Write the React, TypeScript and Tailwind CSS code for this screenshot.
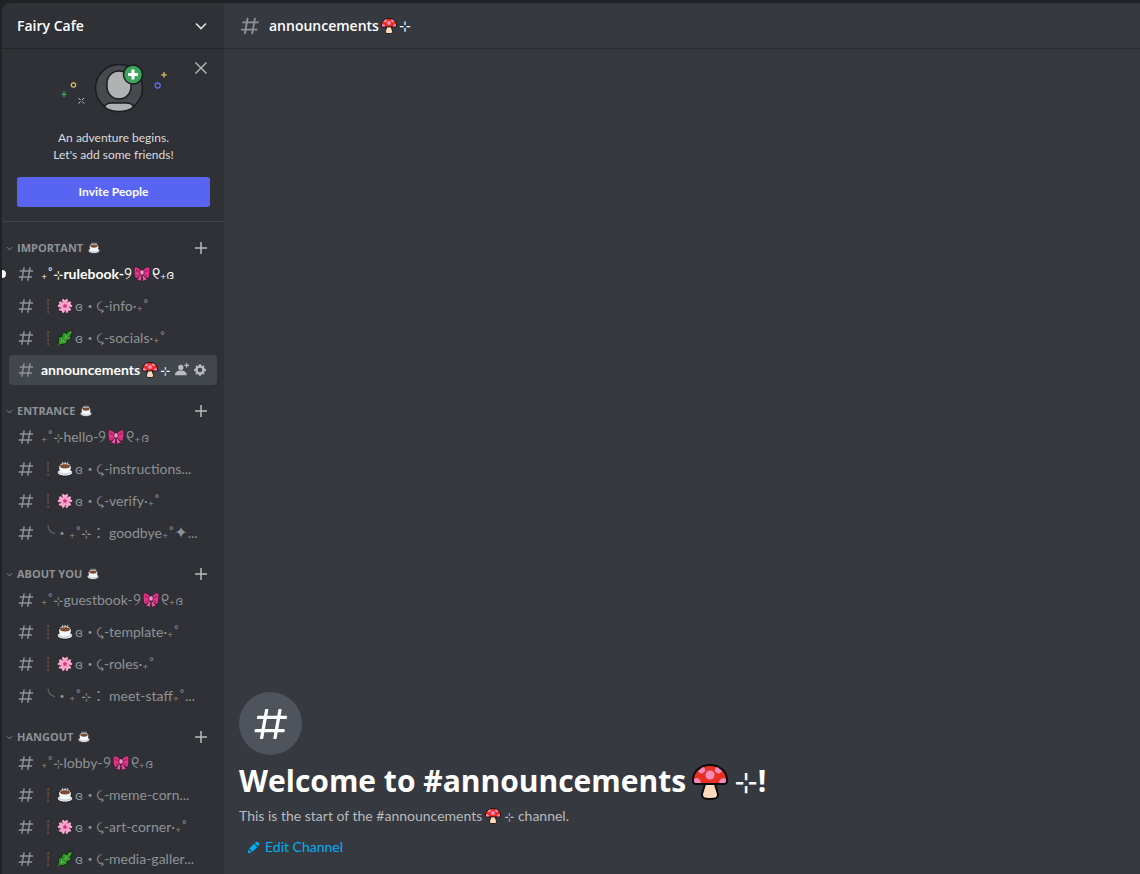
import React from "react";

const SPLIT = /(☕|🎀|🌸|🌿|🍄|[┊・：╰]|[₊˚⊹⤹]+|[୨୧✦]|ദ)/u;

const categories = [
  {
    title: "Important",
    channels: [
      { name: "₊˚⊹rulebook-୨🎀୧₊ദ", unread: true },
      { name: "┊🌸ɞ・⤹-info·₊˚" },
      { name: "┊🌿ɞ・⤹-socials·₊˚" },
      { name: "announcements🍄⊹", active: true },
    ],
  },
  {
    title: "Entrance",
    channels: [
      { name: "₊˚⊹hello-୨🎀୧₊ദ" },
      { name: "┊☕ɞ・⤹-instructions..." },
      { name: "┊🌸ɞ・⤹-verify·₊˚" },
      { name: "╰・₊˚⊹： goodbye₊˚✦..." },
    ],
  },
  {
    title: "About you",
    channels: [
      { name: "₊˚⊹guestbook-୨🎀୧₊ദ" },
      { name: "┊☕ɞ・⤹-template·₊˚" },
      { name: "┊🌸ɞ・⤹-roles·₊˚" },
      { name: "╰・₊˚⊹： meet-staff₊˚..." },
    ],
  },
  {
    title: "Hangout",
    channels: [
      { name: "₊˚⊹lobby-୨🎀୧₊ദ" },
      { name: "┊☕ɞ・⤹-meme-corn..." },
      { name: "┊🌸ɞ・⤹-art-corner·₊˚" },
      { name: "┊🌿ɞ・⤹-media-galler..." },
    ],
  },
];

const HashIcon = ({ className }: { className: string }) => (
  <svg viewBox="0 0 24 24" fill="currentColor" className={className} aria-hidden="true">
    <path
      fillRule="evenodd"
      clipRule="evenodd"
      d="M5.887 21a.5.5 0 0 1-.493-.587L6 17H2.595a.5.5 0 0 1-.492-.586l.175-1A.5.5 0 0 1 2.77 15h3.58l1.06-6H4.005a.5.5 0 0 1-.492-.586l.175-1A.5.5 0 0 1 4.18 7h3.58l.637-3.587A.5.5 0 0 1 8.889 3h.984a.5.5 0 0 1 .493.587L9.76 7h6l.637-3.587A.5.5 0 0 1 16.889 3h.984a.5.5 0 0 1 .493.587L17.76 7h3.405a.5.5 0 0 1 .492.586l-.175 1A.5.5 0 0 1 20.99 9h-3.58l-1.06 6h3.405a.5.5 0 0 1 .492.586l-.175 1a.5.5 0 0 1-.492.414H16l-.637 3.587a.5.5 0 0 1-.492.413h-.984a.5.5 0 0 1-.493-.587L14 17H8l-.637 3.587a.5.5 0 0 1-.492.413h-.984ZM9.41 9l-1.06 6h6l1.06-6h-6Z"
    />
  </svg>
);

const emojiArt: Record<string, React.ReactNode> = {
  "☕": (
    <>
      <path
        d="M5 12C5 7 11 4 18 4s13 3 13 8c1 4 1 6 0 9 3 1 4 3 4 5 0 5-8 8-17 8S1 31 1 26c0-2 1-4 4-5-1-3-1-5 0-9z"
        fill="#f5f8fa"
        stroke="#1b1c1f"
        strokeWidth="2"
      />
      <path d="M5 23c4 6 22 6 26 0 2 1 3 2 3 3-4 7-28 7-32 0 0-1 1-2 3-3z" fill="#cdd3d8" />
      <path d="M5 12c0 9 5 15 13 15s13-6 13-15z" fill="#f5f8fa" />
      <ellipse cx="18" cy="12" rx="11" ry="5" fill="#7d4a34" />
      <path d="M12 8c-2-3 2-3 0-6M18 8c-2-3 2-3 0-6M24 8c-2-3 2-3 0-6" fill="none" stroke="#dfe5ea" strokeWidth="2" />
    </>
  ),
  "🎀": (
    <g stroke="#1b1c1f" strokeWidth="1.500" strokeLinejoin="round">
      <path d="M15 17 5 34l6-2 5 3 3-16zM21 17l10 17-6-2-5 3-3-16z" fill="#ea4fa0" />
      <path d="M18 13C12 3 5 1 2 3c-3 3-1 20 1 24 3 3 10-4 15-10z" fill="#e6348c" />
      <path d="M18 13c6-10 13-12 16-10 3 3 1 20-1 24-3 3-10-4-15-10z" fill="#e6348c" />
      <path d="M5 7l9 7-10-2zM31 7l-9 7 10-2zM5 22l8-5-5 6zM31 22l-8-5 5 6z" fill="#a91c5f" stroke="none" />
      <rect x="13.500" y="9" width="9" height="11" rx="3" fill="#ff8fc8" />
    </g>
  ),
  "🌸": (
    <>
      <g fill="#f9a8d0" stroke="#1b1c1f" strokeWidth="1.500">
        <path d="M18 18C8 11 9 2 14 1l4 3 4-3c5 1 6 10-4 17z" />
        <path d="M18 18C8 11 9 2 14 1l4 3 4-3c5 1 6 10-4 17z" transform="rotate(72 18 18)" />
        <path d="M18 18C8 11 9 2 14 1l4 3 4-3c5 1 6 10-4 17z" transform="rotate(144 18 18)" />
        <path d="M18 18C8 11 9 2 14 1l4 3 4-3c5 1 6 10-4 17z" transform="rotate(216 18 18)" />
        <path d="M18 18C8 11 9 2 14 1l4 3 4-3c5 1 6 10-4 17z" transform="rotate(288 18 18)" />
      </g>
      <circle cx="18" cy="18" r="9" fill="#f9a8d0" />
      <path d="M18 11v7M12 16l6 2M24 16l-6 2M14 24l4-6M22 24l-4-6" stroke="#ea5a9c" strokeWidth="1.500" />
      <circle cx="18" cy="18" r="4" fill="#d62c7b" />
    </>
  ),
  "🌿": (
    <>
      <path
        d="M5 34C1 27 3 18 6 13l4 3c0-6 3-10 8-12l3 5c2-5 7-8 13-8 0 6-1 10-5 13l3 2c-2 5-6 8-11 9l2 3c-4 4-10 6-16 4z"
        fill="#2c8f2b"
        stroke="#0f260d"
        strokeWidth="2"
        strokeLinejoin="round"
      />
      <path d="M2 35 32 4M10 27V17M10 26h11M19 18V9M18 18h11" fill="none" stroke="#7cc144" strokeWidth="1.500" />
    </>
  ),
  "🍄": (
    <g strokeLinejoin="round">
      <path d="M13 18h10c0 6 3 9 3 13 0 3-2 4-8 4s-8-1-8-4c0-4 3-7 3-13z" fill="#ffd9bd" stroke="#0c0c0d" strokeWidth="2" />
      <path d="M1 16C1 7 9 1 18 1s17 6 17 15c0 3-1 4-3 4H4c-2 0-3-1-3-4z" fill="#e93022" stroke="#0c0c0d" strokeWidth="2" />
      <g fill="#f78bb8">
        <circle cx="18" cy="11" r="4.500" />
        <path d="M2 15c3-2 7 0 7 4H4c-2 0-2-2-2-4zM34 15c-3-2-7 0-7 4h5c2 0 2-2 2-4zM6 7l5-4c3 1 3 5 0 6-2 1-4 0-5-2zM30 7l-5-4c-3 1-3 5 0 6 2 1 4 0 5-2z" />
      </g>
    </g>
  ),
};

const EmojiText = ({
  text,
  size,
  symbol = "text-[12px]",
}: {
  text: string;
  size: string;
  symbol?: string;
}) => (
  <>
    {text.split(SPLIT).map((part, key) => {
      if (emojiArt[part]) {
        return (
          <svg key={key} viewBox="0 0 36 36" role="img" aria-label={part} className={`inline-block ${size}`}>
            {emojiArt[part]}
          </svg>
        );
      }
      if (/^[┊・：╰]$/u.test(part)) {
        return (
          <span key={key} className="font-['Noto_Sans_CJK_JP',sans-serif] leading-none">
            {part}
          </span>
        );
      }
      if (/^[₊˚⊹⤹]+$/u.test(part)) {
        return (
          <span key={key} className={`font-['DejaVu_Sans',sans-serif] font-normal leading-none ${symbol}`}>
            {part}
          </span>
        );
      }
      if (/^[୨୧✦]$/u.test(part)) {
        return (
          <span key={key} className="text-[16px] font-normal leading-none">
            {part}
          </span>
        );
      }
      if (part === "ദ") {
        return (
          <span key={key} className="text-[12px] font-normal leading-none">
            {part}
          </span>
        );
      }
      return <React.Fragment key={key}>{part}</React.Fragment>;
    })}
  </>
);

const InviteArt = () => (
  <svg viewBox="58 62 110 52" className="w-[110px] h-[52px]" fill="none" aria-hidden="true">
    <circle cx="118" cy="88" r="23.500" fill="#46494e" stroke="#1b1c1f" strokeWidth="1.500" />
    <path d="M103.500 107c1-3 4-4 7-4h15c3 0 6 1 7 4-8 6-21 6-29 0z" fill="#b0b1b3" stroke="#1b1c1f" strokeWidth="1.500" />
    <rect x="106" y="71" width="24" height="28" rx="12" fill="#b0b1b3" stroke="#1b1c1f" strokeWidth="1.500" />
    <circle cx="132" cy="74.500" r="9.500" fill="#3ba55c" stroke="#1b1c1f" strokeWidth="1.500" />
    <path d="M132 69.500v10M127 74.500h10" stroke="#fff" strokeWidth="3" />
    <circle cx="72.500" cy="85" r="2.200" stroke="#d9c25a" strokeWidth="1.200" />
    <path d="M163 72v5.500M160.300 74.800h5.500" stroke="#d9c25a" strokeWidth="1.300" />
    <path d="M63 91.500v5.500M60.300 94.300h5.500" stroke="#3ba55c" strokeWidth="1.300" />
    <circle cx="156.700" cy="85.500" r="2.500" stroke="#5b70e8" strokeWidth="1.300" />
    <path d="m77.500 98 2 2M83 98l-2 2M77.500 103.500l2-2M83 103.500l-2-2" stroke="#c3cdea" strokeWidth="1" />
  </svg>
);

const PlusIcon = () => (
  <svg viewBox="0 0 12 12" className="size-3" stroke="currentColor" strokeWidth="1.500" aria-hidden="true">
    <path d="M6 0v12M0 6h12" />
  </svg>
);

type ChannelType = { name: string; unread?: boolean; active?: boolean };

const Channel = ({ name, unread, active }: ChannelType) => (
  <li
    className={`relative flex items-center h-[30px] mx-[7px] rounded ${
      active ? "bg-[#42464d]" : "hover:bg-[#34373c]"
    }`}
  >
    {unread && <span className="absolute -left-[7px] w-1 h-2 rounded-r-full bg-white" />}
    <a
      href="#"
      className={`flex flex-1 min-w-0 items-center gap-1.5 pl-2 text-[14px] leading-5 whitespace-nowrap ${
        unread || active ? "text-white font-bold" : "text-[#8e9297]"
      }`}
    >
      <HashIcon className="size-[18px] shrink-0 text-[#8e9297]" />
      <span>
        <EmojiText text={name} size="size-4 mx-[2px] -mt-[2px]" />
      </span>
    </a>
    {active && (
      <div className="flex items-center gap-1 pr-[10px] text-[#b9bbbe]">
        <button type="button" aria-label="Create invite" className="cursor-pointer">
          <svg viewBox="0 0 24 24" className="size-[14px]" fill="currentColor" aria-hidden="true">
            <path d="M21 3V0h-2v3h-3v2h3v3h2V5h3V3zM10 12a4.500 4.500 0 1 0 0-9 4.500 4.500 0 0 0 0 9zM10 13c-6 0-10 3-10 7v1h20v-1c0-4-4-7-10-7z" />
          </svg>
        </button>
        <button type="button" aria-label="Edit channel" className="cursor-pointer">
          <svg viewBox="0 0 24 24" className="size-[14px]" fill="currentColor" aria-hidden="true">
            <path
              fillRule="evenodd"
              d="M19.738 10H22v4h-2.261a7.952 7.952 0 0 1-1.174 2.564L20 18l-2 2-1.435-1.436A7.946 7.946 0 0 1 14 19.738V22h-4v-2.262a7.940 7.940 0 0 1-2.564-1.174L6 20l-2-2 1.436-1.436A7.911 7.911 0 0 1 4.262 14H2v-4h2.262a7.900 7.900 0 0 1 1.174-2.564L4 6l2-2 1.436 1.436A7.900 7.900 0 0 1 10 4.262V2h4v2.261a7.967 7.967 0 0 1 2.565 1.175L18 4l2 2-1.435 1.436A7.920 7.920 0 0 1 19.738 10zM12 16a4 4 0 1 0 0-8 4 4 0 0 0 0 8z"
            />
          </svg>
        </button>
      </div>
    )}
  </li>
);

const Sidebar = () => (
  <nav className="flex flex-col w-[222px] shrink-0 overflow-hidden rounded-tl-lg bg-[#2f3136]">
    <button
      type="button"
      className="flex shrink-0 items-center justify-between h-[46px] pl-[15px] pr-[17px] border-b border-[#222428] text-white text-[14px] font-semibold font-['Open_Sans',sans-serif] cursor-pointer"
    >
      Fairy Cafe
      <svg viewBox="0 0 12 12" className="size-3" fill="none" stroke="#dcddde" strokeWidth="1.700" aria-hidden="true">
        <path d="m1 3.500 5 5 5-5" />
      </svg>
    </button>

    <section className="relative flex shrink-0 flex-col items-center h-[173px] pl-[15px] pr-[14px] pt-[13px] border-b border-[#40434a]">
      <button type="button" aria-label="Close" className="absolute top-[13px] right-[17px] text-[#b9bbbe] cursor-pointer">
        <svg viewBox="0 0 12 12" className="size-3" stroke="currentColor" strokeWidth="1.400" aria-hidden="true">
          <path d="m.5.5 11 11M11.500.5l-11 11" />
        </svg>
      </button>
      <InviteArt />
      <p className="mt-[15px] text-center text-[12px] leading-[17px] text-[#dcddde]">
        An adventure begins.
        <br />
        Let's add some friends!
      </p>
      <button
        type="button"
        className="mt-[14px] h-[30px] w-full rounded-[3px] bg-[#5865f2] text-white text-[12px] font-bold cursor-pointer"
      >
        Invite People
      </button>
    </section>

    <div className="flex flex-col gap-[17px] pt-[17px]">
      {categories.map((category) => (
        <section key={category.title}>
          <div className="flex items-center justify-between h-[18px] mb-[2px] pl-1 pr-[17px] text-[#8e9297]">
            <button
              type="button"
              className="flex items-center gap-1 text-[11px] font-bold font-['Open_Sans',sans-serif] uppercase cursor-pointer"
            >
              <svg viewBox="0 0 8 8" className="size-[7px]" fill="none" stroke="currentColor" aria-hidden="true">
                <path d="m1 2.500 3 3 3-3" />
              </svg>
              <span>
                <EmojiText text={`${category.title} ☕`} size="size-3 -mt-[2px] ml-[2px]" />
              </span>
            </button>
            <button type="button" aria-label="Create channel" className="text-[#b9bbbe] cursor-pointer">
              <PlusIcon />
            </button>
          </div>
          <ul className="flex flex-col gap-[2px]">
            {category.channels.map((channel) => (
              <Channel key={channel.name} {...channel} />
            ))}
          </ul>
        </section>
      ))}
    </div>
  </nav>
);

const App = () => {
  return (
    <div className="flex h-screen overflow-hidden bg-[#202225] pt-[3px] pl-[2px] font-['Lato','DejaVu_Sans','Noto_Sans_CJK_JP',sans-serif]">
      <Sidebar />
      <main className="flex flex-1 min-w-0 flex-col bg-[#36393f]">
        <header className="flex shrink-0 items-center gap-2 h-[46px] pl-[15px] border-b border-[#2a2c31]">
          <HashIcon className="size-[22px] text-[#8e9297]" />
          <h1 className="text-[14px] font-semibold font-['Open_Sans',sans-serif] text-white">
            <EmojiText text="announcements🍄⊹" size="size-4 mx-[2px] -mt-[2px]" symbol="text-[14px]" />
          </h1>
        </header>

        <section className="flex flex-1 flex-col items-start justify-end px-[15px] pb-[17px]">
          <div className="flex items-center justify-center size-[63px] rounded-full bg-[#4f545c]">
            <HashIcon className="size-10 text-white" />
          </div>
          <h2 className="mt-2 text-[30px] leading-9 font-bold font-['Open_Sans',sans-serif] text-white">
            <EmojiText text="Welcome to #announcements🍄⊹!" size="size-9 mx-[6px] -mt-1" symbol="text-[28px]" />
          </h2>
          <p className="mt-[6px] text-[14px] leading-5 text-[#b9bbbe]">
            <EmojiText text="This is the start of the #announcements🍄⊹ channel." size="size-4 mx-[3px] -mt-[2px]" />
          </p>
          <button
            type="button"
            className="flex items-center gap-1 mt-[11px] pl-[7px] text-[14px] leading-5 text-[#00aff4] cursor-pointer"
          >
            <svg viewBox="0 0 24 24" className="size-[15px]" fill="currentColor" aria-hidden="true">
              <path d="m19.293 9.830.648-.647a3.623 3.623 0 0 0-5.124-5.124l-.647.648zM12.896 5.977l-7.711 7.714 5.124 5.122 7.711-7.714zM4.119 20.970l4.640-1.159-4.572-4.572-1.160 4.641a.9.9 0 0 0 1.092 1.090z" />
            </svg>
            Edit Channel
          </button>
        </section>
      </main>
    </div>
  );
};

export default App;
